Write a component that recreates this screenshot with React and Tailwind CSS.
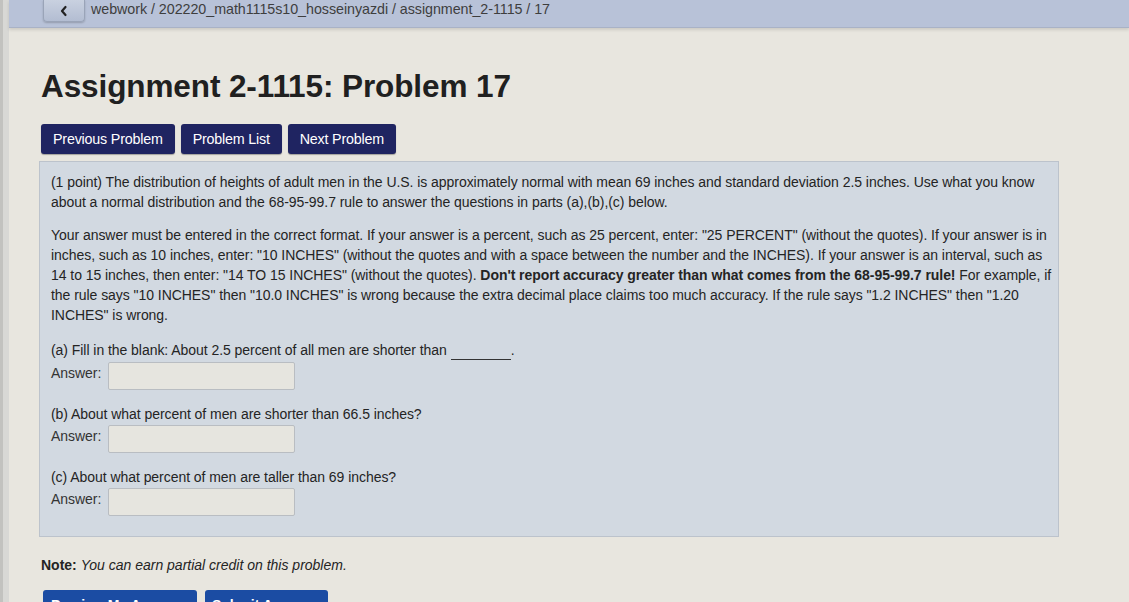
import React from "react";

function Btn({ children }) {
  return (
    <button className="h-[30px] px-[12px] rounded-[3px] bg-[#1f2461] text-white text-[14.3px] leading-[30px] tracking-[-0.2px] shadow-[0_1px_1px_rgba(0,0,0,0.3)]">
      {children}
    </button>
  );
}

function AnswerRow() {
  return (
    <div className="flex items-start">
      <span className="w-[57px] pt-[2px] leading-[20px] text-[#333]">Answer:</span>
      <div className="mt-[1px] h-[28px] w-[187px] rounded-[2px] border border-[#b9bdc2] bg-[#e6e5df]" />
    </div>
  );
}

export default function App() {
  return (
    <div className="min-h-[602px] w-full overflow-hidden bg-[#e8e6df] font-['Liberation_Sans',Arial,Helvetica,sans-serif] text-[#242424] flex">
      <div className="w-[9px] shrink-0 bg-[#d8d8d5] border-l-[3px] border-[#c2c2bf]" />
      <div className="flex-1 flex flex-col">
        {/* top bar */}
        <div className="h-[28px] bg-[#b8c2d8] border-b border-[#a9b2c6] shadow-[0_2px_3px_rgba(0,0,0,0.12)] flex items-start">
          <div className="ml-[34px] h-[22px] w-[42px] shrink-0 rounded-b-[4px] border border-t-0 border-[#9aa4b8] bg-gradient-to-b from-[#c9d1e0] to-[#b3bdd2] flex items-center justify-center shadow-[0_1px_2px_rgba(0,0,0,0.2)]">
            <svg width="10" height="12" viewBox="0 0 10 12" fill="none">
              <path d="M6.5 2 L3 6 L6.5 10" stroke="#222" strokeWidth="2.2" strokeLinecap="round" strokeLinejoin="round" />
            </svg>
          </div>
          <div className="ml-[6px] leading-[18px] text-[14.3px] text-[#3e3e3e] tracking-[-0.05px] whitespace-nowrap">
            webwork / 202220_math1115s10_hosseinyazdi / assignment_2-1115 / 17
          </div>
        </div>

        <div className="pl-[30px]">
          <h1 className="mt-[40px] ml-[2px] text-[31.5px] leading-[36px] font-bold text-[#202020] tracking-[-0.1px]">
            Assignment 2-1115: Problem 17
          </h1>

          <div className="mt-[20px] ml-[2px] flex gap-[6px]">
            <Btn>Previous Problem</Btn>
            <Btn>Problem List</Btn>
            <Btn>Next Problem</Btn>
          </div>

          <div className="mt-[7px] w-[1020px] border border-[#bcc3cc] bg-[#d2d9e1] pl-[11px] pr-[4px] pt-[10px] pb-[20px] text-[14px] leading-[20px] tracking-[-0.05px] whitespace-nowrap">
            <p>
              (1 point) The distribution of heights of adult men in the U.S. is approximately normal with mean 69 inches and standard deviation 2.5 inches. Use what you know
              <br />
              about a normal distribution and the 68-95-99.7 rule to answer the questions in parts (a),(b),(c) below.
            </p>
            <p className="mt-[13px]">
              Your answer must be entered in the correct format. If your answer is a percent, such as 25 percent, enter: "25 PERCENT" (without the quotes). If your answer is in
              <br />
              inches, such as 10 inches, enter: "10 INCHES" (without the quotes and with a space between the number and the INCHES). If your answer is an interval, such as
              <br />
              14 to 15 inches, then enter: "14 TO 15 INCHES" (without the quotes). <b>Don't report accuracy greater than what comes from the 68-95-99.7 rule!</b> For example, if
              <br />
              the rule says "10 INCHES" then "10.0 INCHES" is wrong because the extra decimal place claims too much accuracy. If the rule says "1.2 INCHES" then "1.20
              <br />
              INCHES" is wrong.
            </p>

            <div className="mt-[15px]">
              <p>
                (a) Fill in the blank: About 2.5 percent of all men are shorter than
                <span className="inline-block w-[60px] ml-[4px] border-b border-[#333] translate-y-[-1px]">&nbsp;</span>.
              </p>
              <AnswerRow />
            </div>

            <div className="mt-[14px]">
              <p>(b) About what percent of men are shorter than 66.5 inches?</p>
              <AnswerRow />
            </div>

            <div className="mt-[14px]">
              <p>(c) About what percent of men are taller than 69 inches?</p>
              <AnswerRow />
            </div>
          </div>

          <p className="mt-[18px] ml-[2px] text-[14px] leading-[20px]">
            <b>Note:</b> <i>You can earn partial credit on this problem.</i>
          </p>

          <div className="mt-[15px] ml-[4px] flex gap-[8px]">
            <button className="h-[30px] w-[154px] rounded-t-[3px] bg-[#1b4ca3] text-white text-[14px] font-bold">Preview My Answers</button>
            <button className="h-[30px] w-[123px] rounded-t-[3px] bg-[#1b4ca3] text-white text-[14px] font-bold">Submit Answers</button>
          </div>
        </div>
      </div>
    </div>
  );
}
